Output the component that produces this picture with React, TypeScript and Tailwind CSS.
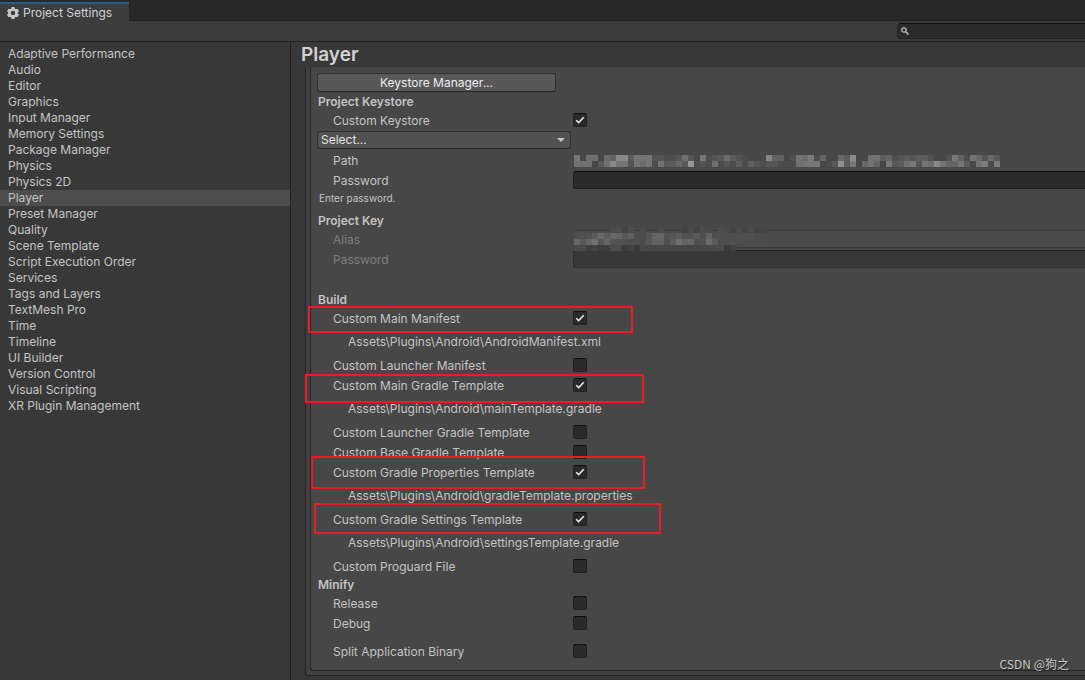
import { useState } from "react";

const sidebarItems = [
  "Adaptive Performance", "Audio", "Editor", "Graphics", "Input Manager", "Memory Settings",
  "Package Manager", "Physics", "Physics 2D", "Player", "Preset Manager", "Quality",
  "Scene Template", "Script Execution Order", "Services", "Tags and Layers", "TextMesh Pro",
  "Time", "Timeline", "UI Builder", "Version Control", "Visual Scripting", "XR Plugin Management",
];

// Grey levels of the censored values, one hex digit pair per 6px cell; "--" leaves a cell clear.
const pathMosaic = [
  "74 -- 70 70 -- 6c 64 88 88 5c 74 74 74 52 54 4c 4e 56 70 56 -- 74 4c 54 5a 6c 5a 52 4c -- -- -- 84 62 62 -- 50 74 6c 78 4c 64 -- -- 68 5c 8c -- -- 70 70 5c 64 4e 54 5c 54 5c 5c 50 -- -- 50 78 60 4c 74 68 54 68 58",
  "70 70 70 -- 5a 70 88 76 76 54 74 6a 74 4c 70 5a 5c 68 5a 98 4c 54 4c 6e 4c 56 4c 5e 4c 60 56 4c 56 56 4c 4c 4c 70 74 78 78 -- 4c 58 90 5c 78 -- 68 74 64 -- 78 58 5c 70 78 54 74 6c 88 74 66 66 74 5c -- 74 7c 4c 7c",
];
const aliasMosaic = [
  "-- -- -- -- -- -- 4b 4b 42 4b -- 4b -- -- 4a -- -- -- 42 4a 42 4b 4b -- 4c 4a 44 4c 44 4a 43 44",
  "4e 50 52 5c 6a 5c 66 66 58 60 4c -- 56 66 66 52 54 5c 52 52 5a 4e 62 4e 4e 4e 4d 4e 4e 4e 4c 4c",
  "66 58 66 72 56 66 54 50 50 4e 4e -- 56 62 62 50 5c 70 64 66 4e 50 6a 5a 4c 4e 4e 4e 4d 4d 4c 4c",
  "4a 4a 3f 42 3c 3e 4c 4c 3c 42 3a 4a 46 46 46 46 46 46 46 46 46 46 48 4b 4b 3a 40 -- -- -- -- --",
];

function Mosaic({ rows, className, label }: { rows: string[]; className: string; label: string }) {
  return (
    <svg className={className} role="img" aria-label={label} shapeRendering="crispEdges">
      {rows.map((row, y) =>
        row.split(" ").map((c, x) =>
          c === "--" ? null : (
            <rect key={`${x}-${y}`} x={x * 6} y={y * 6} width="6" height="6" fill={`#${c}${c}${c}`} />
          ),
        ),
      )}
    </svg>
  );
}

function Heading({ children }: { children: string }) {
  return <h2 className="h-[18px] pl-px leading-[18px] font-semibold text-[#c4c4c4]">{children}</h2>;
}

function Toggle({ label, checked = false, mark }: { label: string; checked?: boolean; mark?: string }) {
  const [on, setOn] = useState(checked);
  const id = label.replace(/ /g, "-").toLowerCase();
  return (
    <div className="relative flex h-[18px] items-center">
      <label htmlFor={id} className="w-64 shrink-0 pt-0.5 pl-4 leading-[18px]">{label}</label>
      <span className="grid size-3.5 shrink-0">
        <input
          id={id}
          type="checkbox"
          checked={on}
          onChange={(e) => setOn(e.target.checked)}
          className="peer col-start-1 row-start-1 size-3.5 appearance-none rounded-[2px] border border-[#212121] border-t-[#0d0d0d] bg-[#2a2a2a]"
        />
        <svg viewBox="0 0 14 14" className="pointer-events-none invisible col-start-1 row-start-1 size-3.5 peer-checked:visible">
          <path d="M3.200 7.200 5.600 9.600 10.800 4.200" fill="none" stroke="#e6e6e6" strokeWidth="1.600" />
        </svg>
      </span>
      {mark && <span className={`pointer-events-none absolute z-10 border-2 border-[#ed1c24] ${mark}`} />}
    </div>
  );
}

function AssetPath({ children }: { children: string }) {
  return <p className="h-[25px] pl-[31px] leading-[26px]">{children}</p>;
}

export default function App() {
  return (
    <div className="flex h-screen flex-col overflow-hidden bg-[#383838] font-[Inter,sans-serif] text-[12px] text-[#c4c4c4]">
      <header className="flex h-[21px] shrink-0 bg-[#282828]">
        <div className="mt-[2px] flex w-[129px] items-center gap-1 border-t-2 border-[#2c5d87] bg-[#3c3c3c] pl-[7px]">
          <svg viewBox="0 0 24 24" className="size-3 shrink-0" fill="#c8c8c8" fillRule="evenodd">
            <path d="M9 0h6l.8 3.6 2 1.1 3.4-1.1 2.8 5-2.6 2.5v2l2.6 2.4-2.8 5-3.4-1.1-2 1.1L15 24H9l-.8-3.5-2-1.1-3.4 1.1-2.8-5 2.6-2.4v-2L0 8.600l2.800-5 3.400 1.100 2-1.100zM12 7.500a4.500 4.500 0 1 0 0 9 4.500 4.500 0 0 0 0-9z" />
          </svg>
          <span className="whitespace-nowrap text-[#d2d2d2]">Project Settings</span>
        </div>
        <div className="flex-1 border-b border-[#1f1f1f]" />
      </header>

      <div className="flex h-[21px] shrink-0 items-center justify-end border-b border-[#232323] bg-[#3c3c3c]">
        <label className="flex h-4 w-[188px] items-center rounded-l-[4px] border border-r-0 border-[#212121] border-t-[#0d0d0d] bg-[#2a2a2a] pl-[3px]">
          <svg viewBox="0 0 8 8" className="size-2 shrink-0" fill="none" stroke="#c4c4c4">
            <circle cx="3" cy="3" r="2.200" strokeWidth="1.200" />
            <path d="M4.700 4.700 7.500 7.500" strokeWidth="1.500" />
          </svg>
          <input aria-label="Search settings" className="min-w-0 flex-1 bg-transparent px-1 outline-none" />
        </label>
      </div>

      <div className="flex min-h-0 flex-1">
        <nav className="w-[291px] shrink-0 border-r border-[#232323] pt-1">
          {sidebarItems.map((item) => (
            <a key={item} href="#" className={`block h-4 pl-2 leading-4 ${item === "Player" ? "bg-[#4d4d4d]" : ""}`}>
              {item}
            </a>
          ))}
        </nav>

        <main className="flex min-w-0 flex-1 flex-col">
          <h1 className="h-[25px] shrink-0 pl-[10px] text-[19px] leading-[25px] font-semibold text-[#d2d2d2]">Player</h1>
          <div className="ml-[14px] rounded-bl-[3px] border-b border-l border-[#242424] bg-[#414141] pb-1 pl-1">
            <div className="rounded-bl-[3px] border-b border-l border-[#242424] bg-[#474747] pt-[6px] pb-[10px] pl-[6px]">
              <button className="block h-[19px] w-[239px] rounded-[3px] border border-[#303030] border-b-[#242424] bg-[#585858] leading-[18px] text-[#eeeeee]">
                Keystore Manager...
              </button>

              <section className="pt-px">
                <Heading>Project Keystore</Heading>
                <div className="flex flex-col gap-0.5">
                  <Toggle label="Custom Keystore" checked />
                  <div className="grid w-[254px] items-center">
                    <select
                      aria-label="Keystore"
                      className="col-start-1 row-start-1 h-[18px] appearance-none rounded-[3px] border border-[#303030] border-b-[#242424] bg-[#515151] pl-[3px] leading-4 text-[#e4e4e4]"
                    >
                      <option>Select...</option>
                    </select>
                    <svg viewBox="0 0 8 4" className="pointer-events-none col-start-1 row-start-1 mr-[6px] h-1 w-2 justify-self-end" fill="#c4c4c4">
                      <path d="M0 0h8L4 4z" />
                    </svg>
                  </div>
                  <div className="flex h-[18px] items-center">
                    <span className="w-[257px] shrink-0 pt-0.5 pl-4 leading-[18px]">Path</span>
                    <Mosaic rows={pathMosaic} className="mt-0.5 h-3 w-[427px] shrink-0" label="Keystore path" />
                  </div>
                  <div className="flex h-[18px] items-center">
                    <label htmlFor="keystore-password" className="w-64 shrink-0 pt-0.5 pl-4 leading-[18px]">Password</label>
                    <input id="keystore-password" type="password" className="h-[18px] min-w-0 flex-1 rounded-l-[3px] border border-r-0 border-[#212121] border-t-[#0d0d0d] bg-[#2a2a2a] px-1" />
                  </div>
                </div>
                <p className="pl-[2px] text-[10px] leading-[18px]">Enter password.</p>
              </section>

              <section className="pt-[5px]">
                <Heading>Project Key</Heading>
                <div className="flex flex-col gap-0.5 text-[#7d7d7d]">
                  <div className="flex h-[18px] items-center">
                    <span className="w-64 shrink-0 pt-0.5 pl-4 leading-[18px]">Alias</span>
                    <div className="relative h-[18px] flex-1 rounded-l-[3px] border-y border-[#3c3c3c] bg-[#4b4b4b]">
                      <Mosaic rows={aliasMosaic} className="absolute -top-[4px] left-px h-6 w-48" label="Key alias" />
                    </div>
                  </div>
                  <div className="flex h-[18px] items-center">
                    <label htmlFor="key-password" className="w-64 shrink-0 pt-0.5 pl-4 leading-[18px]">Password</label>
                    <input id="key-password" type="password" disabled className="h-[18px] min-w-0 flex-1 rounded-l-[3px] border border-r-0 border-[#2e2e2e] border-t-[#242424] bg-[#383838] px-1" />
                  </div>
                </div>
              </section>

              <section className="pt-[23px]">
                <Heading>Build</Heading>
                <div className="flex flex-col gap-0.5">
                  <Toggle label="Custom Main Manifest" checked mark="-left-[9px] -top-[3px] h-[27px] w-[325px]" />
                  <AssetPath>Assets\Plugins\Android\AndroidManifest.xml</AssetPath>
                  <Toggle label="Custom Launcher Manifest" />
                  <Toggle label="Custom Main Gradle Template" checked mark="-left-[12px] -top-[2px] h-[29px] w-[339px]" />
                  <AssetPath>Assets\Plugins\Android\mainTemplate.gradle</AssetPath>
                  <Toggle label="Custom Launcher Gradle Template" />
                  <Toggle label="Custom Base Gradle Template" />
                  <Toggle label="Custom Gradle Properties Template" checked mark="-left-[6px] -top-[7px] h-[33px] w-[334px]" />
                  <AssetPath>Assets\Plugins\Android\gradleTemplate.properties</AssetPath>
                  <Toggle label="Custom Gradle Settings Template" checked mark="-left-[3px] -top-[7px] h-[31px] w-[347px]" />
                  <AssetPath>Assets\Plugins\Android\settingsTemplate.gradle</AssetPath>
                  <Toggle label="Custom Proguard File" />
                </div>
              </section>

              <section className="pt-px">
                <Heading>Minify</Heading>
                <div className="flex flex-col gap-0.5">
                  <Toggle label="Release" />
                  <Toggle label="Debug" />
                </div>
              </section>
              <div className="pt-[10px]">
                <Toggle label="Split Application Binary" />
              </div>
            </div>
          </div>
        </main>
      </div>
      <div className="pointer-events-none absolute right-4 bottom-2 font-['Noto_Sans_CJK_SC',sans-serif] text-[12px] leading-4 text-[#c8c8c8] [text-shadow:1px_1px_1px_#222]">
        CSDN @狗之
      </div>
    </div>
  );
}
